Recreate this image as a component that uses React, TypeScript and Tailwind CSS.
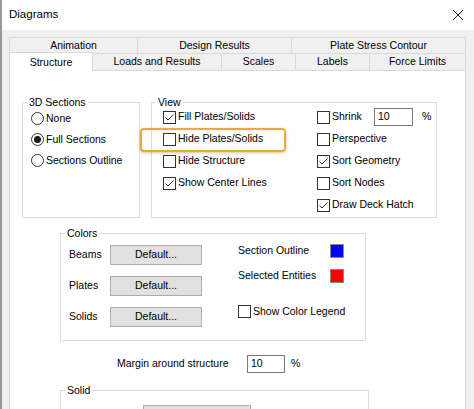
import React from "react";

const Check = ({ on }: { on?: boolean }) => (
  <span className="w-[13px] h-[13px] border border-[#333] bg-white flex items-center justify-center shrink-0">
    {on && (
      <svg width="11" height="11" viewBox="0 0 11 11">
        <polyline points="1.5,5.5 4,8 9.5,2.5" fill="none" stroke="#333" strokeWidth="1" />
      </svg>
    )}
  </span>
);

const Radio = ({ on }: { on?: boolean }) => (
  <span className="w-[13px] h-[13px] rounded-full border border-[#333] bg-white flex items-center justify-center shrink-0">
    {on && <span className="w-[7px] h-[7px] rounded-full bg-[#1a1a1a]" />}
  </span>
);

const CheckRow = ({ label, on }: { label: string; on?: boolean }) => (
  <div className="h-[22px] flex items-center gap-[2px]">
    <Check on={on} />
    <span>{label}</span>
  </div>
);

const RadioRow = ({ label, on }: { label: string; on?: boolean }) => (
  <div className="h-[21px] flex items-center gap-[2px]">
    <Radio on={on} />
    <span>{label}</span>
  </div>
);

const Btn = () => (
  <div className="w-[92px] h-[20px] bg-[#e1e1e1] border border-[#adadad] flex items-center justify-center">
    Default...
  </div>
);

const Legend = ({ children }: { children: React.ReactNode }) => (
  <legend className="ml-[4px] px-[2px] leading-[12px]">{children}</legend>
);

export default function App() {
  const row1 = [
    { t: "Animation", w: "w-[128px]" },
    { t: "Design Results", w: "w-[154px]" },
    { t: "Plate Stress Contour", w: "w-[175px]" },
  ];
  const row2 = [
    { t: "Loads and Results", w: "w-[128px]" },
    { t: "Scales", w: "w-[74px]" },
    { t: "Labels", w: "w-[74px]" },
    { t: "Force Limits", w: "w-[97px]" },
  ];

  return (
    <div className="relative w-[474px] h-[409px] overflow-hidden bg-[#f0f0f0] border-l-2 border-[#9a9a9a] flex flex-col text-black text-[10.5px] font-['Liberation_Sans',Arial,sans-serif]">
      {/* title bar */}
      <div className="h-[30px] bg-white flex items-center justify-between pl-[7px] pr-[10px] shrink-0">
        <span className="text-[11.5px]">Diagrams</span>
        <svg width="12" height="12" viewBox="0 0 12 12">
          <path d="M1 1L11 11M11 1L1 11" stroke="#222" strokeWidth="1" />
        </svg>
      </div>

      <div className="flex-1 flex flex-col pt-[7px] pl-[7px] pr-[8px]">
        {/* back tab row */}
        <div className="flex h-[16px]">
          {row1.map((r, i) => (
            <div
              key={r.t}
              className={`${r.w} h-full flex items-center justify-center border-t border-l border-[#d9d9d9] bg-[#f0f0f0] ${i === 2 ? "border-r" : ""}`}
            >
              {r.t}
            </div>
          ))}
        </div>
        {/* front tab row */}
        <div className="flex h-[17px] items-end">
          <div className="w-[84px] h-[19px] -mb-px relative z-10 bg-white border-t border-l border-r border-[#d9d9d9] flex items-start justify-center pt-[2px]">
            Structure
          </div>
          {row2.map((r, i) => (
            <div
              key={r.t}
              className={`${r.w} h-[17px] flex items-center justify-center border-t border-[#d9d9d9] bg-[#f0f0f0] ${i > 0 ? "border-l" : ""} ${i === 3 ? "border-r" : ""}`}
            >
              {r.t}
            </div>
          ))}
        </div>

        {/* panel */}
        <div className="flex-1 bg-white border border-b-0 border-[#d9d9d9] flex flex-col">
          <div className="flex mt-[25px] ml-[12px] gap-[11px]">
            <fieldset className="w-[118px] h-[122px] border border-[#dcdcdc]">
              <Legend>3D Sections</Legend>
              <div className="pl-[8px]">
                <RadioRow label="None" />
                <RadioRow label="Full Sections" on />
                <RadioRow label="Sections Outline" />
              </div>
            </fieldset>

            <fieldset className="w-[286px] h-[122px] border border-[#dcdcdc]">
              <Legend>View</Legend>
              <div className="flex -mt-[2px] pl-[11px]">
                <div className="w-[154px] flex flex-col">
                  <CheckRow label="Fill Plates/Solids" on />
                  <CheckRow label="Hide Plates/Solids" />
                  <CheckRow label="Hide Structure" />
                  <CheckRow label="Show Center Lines" on />
                </div>
                <div className="flex flex-col">
                  <div className="h-[22px] flex items-center">
                    <Check />
                    <span className="w-[44px] pl-[2px]">Shrink</span>
                    <div className="w-[39px] h-[18px] border border-[#7a7a7a] pl-[3px] flex items-center bg-white">10</div>
                    <span className="ml-[9px]">%</span>
                  </div>
                  <CheckRow label="Perspective" />
                  <CheckRow label="Sort Geometry" on />
                  <CheckRow label="Sort Nodes" />
                  <CheckRow label="Draw Deck Hatch" on />
                </div>
              </div>
            </fieldset>
          </div>

          <fieldset className="mt-[9px] ml-[50px] w-[306px] h-[114px] border border-[#dcdcdc]">
            <Legend>Colors</Legend>
            <div className="flex pl-[8px]">
              <div className="flex flex-col gap-[11px] mt-[6px]">
                {["Beams", "Plates", "Solids"].map((l) => (
                  <div key={l} className="flex items-center h-[20px]">
                    <span className="w-[41px]">{l}</span>
                    <Btn />
                  </div>
                ))}
              </div>
              <div className="flex flex-col ml-[36px] mt-[5px]">
                <div className="flex items-center h-[14px]">
                  <span className="w-[92px]">Section Outline</span>
                  <span className="w-[14px] h-[14px] bg-[#0000ff] border border-[#8a8a8a]" />
                </div>
                <div className="flex items-center h-[14px] mt-[11px]">
                  <span className="w-[92px]">Selected Entities</span>
                  <span className="w-[14px] h-[14px] bg-[#ff0000] border border-[#8a8a8a]" />
                </div>
                <div className="flex items-center gap-[2px] mt-[21px]">
                  <Check />
                  <span>Show Color Legend</span>
                </div>
              </div>
            </div>
          </fieldset>

          <div className="flex items-center mt-[14px] ml-[107px] h-[18px]">
            <span className="w-[130px]">Margin around structure</span>
            <div className="w-[38px] h-[18px] border border-[#7a7a7a] pl-[3px] flex items-center">10</div>
            <span className="ml-[6px]">%</span>
          </div>

          <fieldset className="mt-[11px] ml-[50px] w-[309px] h-[60px] border border-[#dcdcdc]">
            <Legend>Solid</Legend>
            <div className="ml-[82px] mt-[9px] w-[108px] h-[20px] bg-[#e1e1e1] border border-[#adadad]" />
          </fieldset>
        </div>
      </div>

      {/* focus highlight */}
      <div className="absolute left-[138px] top-[128px] w-[146px] h-[24px] border-2 border-[#e8aa3c] rounded-[4px] shadow-[0_1px_3px_rgba(200,140,40,0.5)]" />
    </div>
  );
}
